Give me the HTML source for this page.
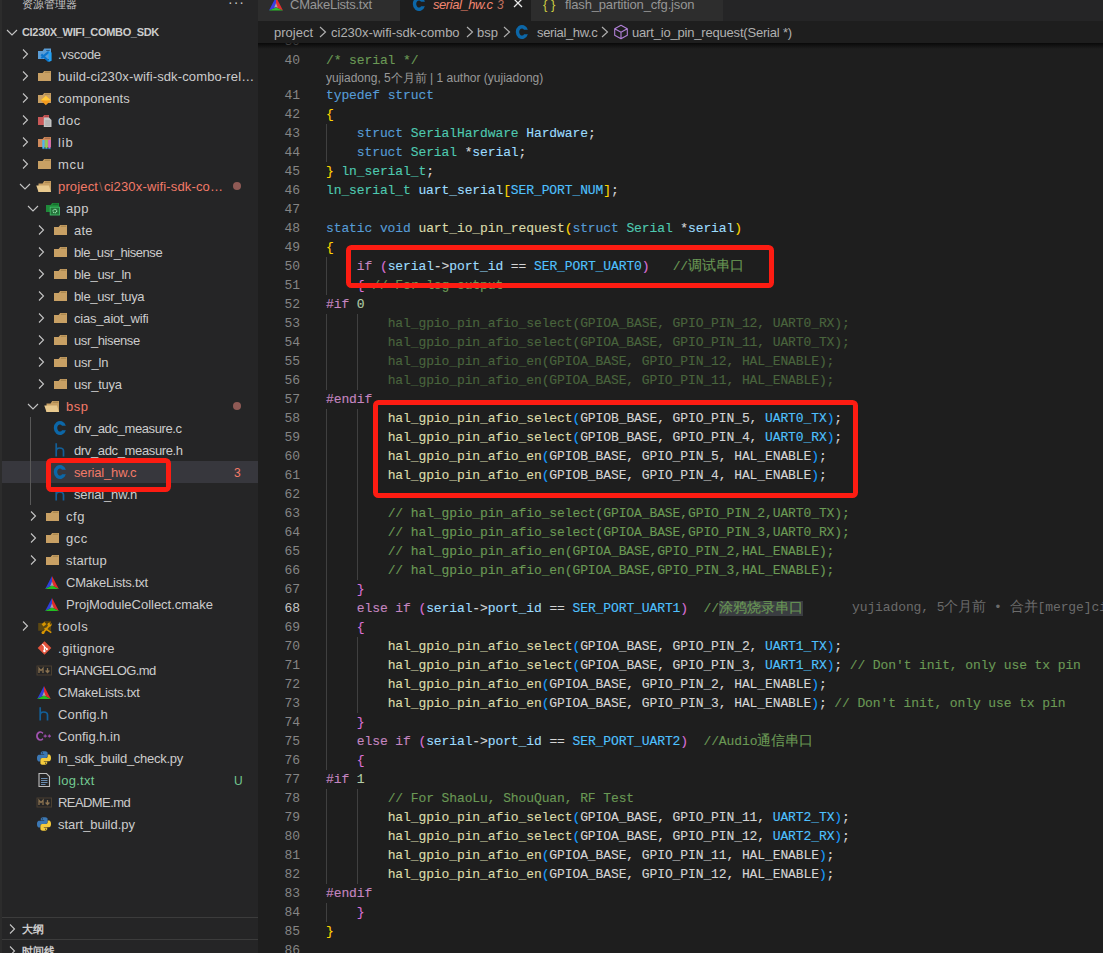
<!DOCTYPE html>
<html><head><meta charset="utf-8">
<style>
*{margin:0;padding:0;box-sizing:border-box}
html,body{width:1103px;height:953px;overflow:hidden;background:#1e1e1e}
body{position:relative;font-family:"Liberation Sans",sans-serif}
#side{position:absolute;left:0;top:0;width:258px;height:953px;background:#252526;overflow:hidden}
#side .edge{position:absolute;left:0;top:0;width:2px;height:953px;background:#2c2c2c}
.hdr{position:absolute;left:22px;top:-3px;font-size:11px;color:#c8c8c8;line-height:14px}
.more{position:absolute;left:228px;top:-6px;font-size:14px;color:#c5c5c5;letter-spacing:1px}
.root{position:absolute;left:0;top:21px;width:258px;height:22px}
.root .lbl{position:absolute;left:22px;top:0;line-height:22px;font-size:11px;font-weight:bold;color:#cccccc;letter-spacing:-0.32px}
.row{position:absolute;left:2px;width:256px;height:22px}
.row.sel{background:#37373d}
.row .lbl{position:absolute;top:1px;line-height:22px;font-size:13px;white-space:nowrap;margin-left:-2px}
.row .ico{position:absolute;top:3px;width:16px;height:16px;margin-left:-2px}
.row .ico svg,.row .chev svg{display:block}
.row .chev{position:absolute;top:3px;width:16px;height:16px;margin-left:-2px}
.sep{color:#8a5a50;padding:0 1px}
.dot{position:absolute;left:231px;top:7px;width:8px;height:8px;border-radius:50%;background:#8f5a55}
.badge{position:absolute;left:232px;top:1px;line-height:22px;font-size:12px}
.guide{position:absolute;left:30px;top:417px;width:1px;height:88px;background:#585858}
.sect{position:absolute;left:2px;width:256px;height:22px;border-top:1px solid #3c3c3c}
.sect .lbl{position:absolute;left:20px;top:1px;line-height:21px;font-size:11px;font-weight:bold;color:#cccccc}
.sect .chev{position:absolute;left:2px;top:3px}
.sect svg{display:block}

#tabs{position:absolute;left:258px;top:0;width:845px;height:21px;background:#252526}
.tab{position:absolute;top:0;height:21px;background:#2d2d2d;white-space:nowrap}
.tab.act{background:#1e1e1e}
.tab .t{position:absolute;top:-5px;line-height:20px;font-size:13px;color:#969696}
.tab svg{position:absolute;display:block}
#crumb{position:absolute;left:258px;top:21px;width:845px;height:22px;background:#1e1e1e;white-space:nowrap}
#crumb span{position:absolute;top:1px;line-height:22px;font-size:13px;color:#b0b0b0}
#crumb svg{position:absolute;display:block}
#editor{position:absolute;left:258px;top:43px;width:845px;height:910px;background:#1e1e1e;overflow:hidden}
#editor .inner{position:absolute;left:-258px;top:-43px;width:1103px;height:953px}
.shadow{position:absolute;left:258px;top:43px;width:845px;height:6px;background:linear-gradient(#000000b0,#00000000)}
.ln{position:absolute;left:258px;width:42px;text-align:right;font-family:"Liberation Mono",monospace;font-size:13px;line-height:19px;height:19px;color:#858585;letter-spacing:-0.1px}
.ln.cur{color:#c6c6c6}
.cl{position:absolute;left:326px;height:19px;line-height:19px;font-family:"Liberation Mono",monospace;font-size:13px;letter-spacing:-0.1px;white-space:pre;color:#d4d4d4;-webkit-text-stroke:0.12px}
.k{color:#569cd6}.c{color:#c586c0}.f{color:#dcdcaa}.v{color:#9cdcfe}.t{color:#4ec9b0}.m{color:#6a9955}
.n{color:#b5cea8}.e{color:#4fc1ff}.b1{color:#ffd700}.b2{color:#da70d6}.b3{color:#179fff}
.ia{color:#6a9955;opacity:.57}
.hl{color:#6a9955;background:#3a3d41}
.ig{position:absolute;width:1px;background:#404040}
.zh{font-size:14px;letter-spacing:0}
.lens{position:absolute;left:326px;top:70px;line-height:16px;font-size:12px;color:#999999;white-space:nowrap}
.blame{position:absolute;left:852px;top:598px;line-height:19px;font-family:"Liberation Mono",monospace;font-size:13px;letter-spacing:-0.1px;color:#6b6b6b;white-space:pre}
.rbox{position:absolute;border:5px solid #fd1c12;border-radius:5.5px}
</style></head><body>
<div id="side">
  <div class="edge"></div>
  <div class="hdr">资源管理器</div>
  <div class="more">···</div>
  <div class="root"><span class="chev" style="position:absolute;left:4px;top:3px"><svg width="16" height="16" viewBox="0 0 16 16"><path d="M3 6l5 5 5-5" fill="none" stroke="#c5c5c5" stroke-width="1.1"/></svg></span><span class="lbl">CI230X_WIFI_COMBO_SDK</span></div>
<div class="row" style="top:43px"><span class="chev" style="left:17px"><svg width="16" height="16" viewBox="0 0 16 16"><path d="M6 3.5L10.5 8 6 12.5" fill="none" stroke="#c5c5c5" stroke-width="1.1"/></svg></span><span class="ico" style="left:36px"><svg width="16" height="16" viewBox="0 0 16 16"><path d="M2 5H6.6L8.2 2.6H15V13H2Z" fill="#5a9dd6"/><path d="M10.2 4.5H13.7" stroke="#2c5a80" stroke-width=".9"/><path d="M5.3 8.4L12.8 15.2M5.3 12L12.8 5.9" stroke="#0b74cc" stroke-width="2.1"/><path d="M12.6 5.4L15.6 6.6V14.8L12.6 16Z" fill="#22a1f4"/></svg></span><span class="lbl" style="left:58px;color:#cccccc;letter-spacing:-0.283px">.vscode</span></div>
<div class="row" style="top:65px"><span class="chev" style="left:17px"><svg width="16" height="16" viewBox="0 0 16 16"><path d="M6 3.5L10.5 8 6 12.5" fill="none" stroke="#c5c5c5" stroke-width="1.1"/></svg></span><span class="ico" style="left:36px"><svg width="16" height="16" viewBox="0 0 16 16"><path d="M2 5H6.6L8.2 3H15V13H2Z" fill="#c8a064"/><path d="M8.8 4.2H14.2" stroke="#9c7a45" stroke-width=".9"/></svg></span><span class="lbl" style="left:58px;color:#cccccc;letter-spacing:0.129px">build-ci230x-wifi-sdk-combo-rel…</span></div>
<div class="row" style="top:87px"><span class="chev" style="left:17px"><svg width="16" height="16" viewBox="0 0 16 16"><path d="M6 3.5L10.5 8 6 12.5" fill="none" stroke="#c5c5c5" stroke-width="1.1"/></svg></span><span class="ico" style="left:36px"><svg width="16" height="16" viewBox="0 0 16 16"><path d="M2 5H6.6L8.2 3H15V13H2Z" fill="#c8a064"/><path d="M8.8 4.2H14.2" stroke="#9c7a45" stroke-width=".9"/><path d="M9.8 5.8L15 10.2L9.8 15.2L4.8 10.2Z" fill="#f29a1e"/><path d="M9.8 5.8L15 10.2L9.8 10.6L4.8 10.2Z" fill="#ffc93a"/></svg></span><span class="lbl" style="left:58px;color:#cccccc;letter-spacing:0.111px">components</span></div>
<div class="row" style="top:109px"><span class="chev" style="left:17px"><svg width="16" height="16" viewBox="0 0 16 16"><path d="M6 3.5L10.5 8 6 12.5" fill="none" stroke="#c5c5c5" stroke-width="1.1"/></svg></span><span class="ico" style="left:36px"><svg width="16" height="16" viewBox="0 0 16 16"><path d="M2 5H6.6L8.2 3H13V13H2Z" fill="#c95858"/><path d="M8.8 4.2H12.5" stroke="#9c4040" stroke-width=".9"/><path d="M7.8 5.5H13L15.5 8V15H7.8Z" fill="#c4c4c4"/><path d="M9.2 9H14M9.2 11H14M9.2 13H14" stroke="#9a9a9a" stroke-width=".8"/></svg></span><span class="lbl" style="left:58px;color:#cccccc;letter-spacing:0.700px">doc</span></div>
<div class="row" style="top:131px"><span class="chev" style="left:17px"><svg width="16" height="16" viewBox="0 0 16 16"><path d="M6 3.5L10.5 8 6 12.5" fill="none" stroke="#c5c5c5" stroke-width="1.1"/></svg></span><span class="ico" style="left:36px"><svg width="16" height="16" viewBox="0 0 16 16"><path d="M2 5H6.6L8.2 3H15V13H2Z" fill="#cf8a5c"/><path d="M8.8 4.2H14.2" stroke="#9c6040" stroke-width=".9"/><rect x="6.3" y="6" width="2.3" height="8" fill="#4db6ef"/><rect x="9.3" y="6" width="2.3" height="8" fill="#83d05a"/><rect x="12.3" y="6" width="2.3" height="8" fill="#d660d0"/><path d="M6.3 14.6h2.3M9.3 14.6h2.3M12.3 14.6h2.3" stroke="#3a9ad0" stroke-width="1"/></svg></span><span class="lbl" style="left:58px;color:#cccccc;letter-spacing:0.900px">lib</span></div>
<div class="row" style="top:153px"><span class="chev" style="left:17px"><svg width="16" height="16" viewBox="0 0 16 16"><path d="M6 3.5L10.5 8 6 12.5" fill="none" stroke="#c5c5c5" stroke-width="1.1"/></svg></span><span class="ico" style="left:36px"><svg width="16" height="16" viewBox="0 0 16 16"><path d="M2 5H6.6L8.2 3H15V13H2Z" fill="#c8a064"/><path d="M8.8 4.2H14.2" stroke="#9c7a45" stroke-width=".9"/></svg></span><span class="lbl" style="left:58px;color:#cccccc;letter-spacing:0.700px">mcu</span></div>
<div class="row" style="top:175px"><span class="chev" style="left:17px"><svg width="16" height="16" viewBox="0 0 16 16"><path d="M3 6l5 5 5-5" fill="none" stroke="#c5c5c5" stroke-width="1.1"/></svg></span><span class="ico" style="left:36px"><svg width="16" height="16" viewBox="0 0 16 16"><path d="M2.5 5.5H6.6L8.2 3H15V14H2.5Z" fill="#c8a064"/><path d="M8.8 4.2H14.2" stroke="#9c7a45" stroke-width=".9"/><path d="M0.3 7.6H13L15 14H2.5Z" fill="#e8c98e"/></svg></span><span class="lbl" style="left:58px;color:#f27a68;letter-spacing:0.154px">project<span class="sep">\</span>ci230x-wifi-sdk-co…</span><span class="dot"></span></div>
<div class="row" style="top:197px"><span class="chev" style="left:25px"><svg width="16" height="16" viewBox="0 0 16 16"><path d="M3 6l5 5 5-5" fill="none" stroke="#c5c5c5" stroke-width="1.1"/></svg></span><span class="ico" style="left:44px"><svg width="16" height="16" viewBox="0 0 16 16"><path d="M2 5H6.6L8.2 3H15V12H2Z" fill="#1f8a3a"/><path d="M8.8 4.2H14.2" stroke="#136028" stroke-width=".9"/><rect x="6.2" y="7.2" width="9.3" height="7.8" fill="#25733a" stroke="#3fbf68" stroke-width=".9"/><circle cx="10.9" cy="11" r="1.8" fill="none" stroke="#a6efbd" stroke-width="1.1" stroke-dasharray="1 .6"/></svg></span><span class="lbl" style="left:66px;color:#cccccc;letter-spacing:0.350px">app</span></div>
<div class="row" style="top:219px"><span class="chev" style="left:33px"><svg width="16" height="16" viewBox="0 0 16 16"><path d="M6 3.5L10.5 8 6 12.5" fill="none" stroke="#c5c5c5" stroke-width="1.1"/></svg></span><span class="ico" style="left:52px"><svg width="16" height="16" viewBox="0 0 16 16"><path d="M2 5H6.6L8.2 3H15V13H2Z" fill="#c8a064"/><path d="M8.8 4.2H14.2" stroke="#9c7a45" stroke-width=".9"/></svg></span><span class="lbl" style="left:74px;color:#cccccc;letter-spacing:0.250px">ate</span></div>
<div class="row" style="top:241px"><span class="chev" style="left:33px"><svg width="16" height="16" viewBox="0 0 16 16"><path d="M6 3.5L10.5 8 6 12.5" fill="none" stroke="#c5c5c5" stroke-width="1.1"/></svg></span><span class="ico" style="left:52px"><svg width="16" height="16" viewBox="0 0 16 16"><path d="M2 5H6.6L8.2 3H15V13H2Z" fill="#c8a064"/><path d="M8.8 4.2H14.2" stroke="#9c7a45" stroke-width=".9"/></svg></span><span class="lbl" style="left:74px;color:#cccccc;letter-spacing:-0.429px">ble_usr_hisense</span></div>
<div class="row" style="top:263px"><span class="chev" style="left:33px"><svg width="16" height="16" viewBox="0 0 16 16"><path d="M6 3.5L10.5 8 6 12.5" fill="none" stroke="#c5c5c5" stroke-width="1.1"/></svg></span><span class="ico" style="left:52px"><svg width="16" height="16" viewBox="0 0 16 16"><path d="M2 5H6.6L8.2 3H15V13H2Z" fill="#c8a064"/><path d="M8.8 4.2H14.2" stroke="#9c7a45" stroke-width=".9"/></svg></span><span class="lbl" style="left:74px;color:#cccccc;letter-spacing:-0.300px">ble_usr_ln</span></div>
<div class="row" style="top:285px"><span class="chev" style="left:33px"><svg width="16" height="16" viewBox="0 0 16 16"><path d="M6 3.5L10.5 8 6 12.5" fill="none" stroke="#c5c5c5" stroke-width="1.1"/></svg></span><span class="ico" style="left:52px"><svg width="16" height="16" viewBox="0 0 16 16"><path d="M2 5H6.6L8.2 3H15V13H2Z" fill="#c8a064"/><path d="M8.8 4.2H14.2" stroke="#9c7a45" stroke-width=".9"/></svg></span><span class="lbl" style="left:74px;color:#cccccc;letter-spacing:-0.355px">ble_usr_tuya</span></div>
<div class="row" style="top:307px"><span class="chev" style="left:33px"><svg width="16" height="16" viewBox="0 0 16 16"><path d="M6 3.5L10.5 8 6 12.5" fill="none" stroke="#c5c5c5" stroke-width="1.1"/></svg></span><span class="ico" style="left:52px"><svg width="16" height="16" viewBox="0 0 16 16"><path d="M2 5H6.6L8.2 3H15V13H2Z" fill="#c8a064"/><path d="M8.8 4.2H14.2" stroke="#9c7a45" stroke-width=".9"/></svg></span><span class="lbl" style="left:74px;color:#cccccc;letter-spacing:-0.200px">cias_aiot_wifi</span></div>
<div class="row" style="top:329px"><span class="chev" style="left:33px"><svg width="16" height="16" viewBox="0 0 16 16"><path d="M6 3.5L10.5 8 6 12.5" fill="none" stroke="#c5c5c5" stroke-width="1.1"/></svg></span><span class="ico" style="left:52px"><svg width="16" height="16" viewBox="0 0 16 16"><path d="M2 5H6.6L8.2 3H15V13H2Z" fill="#c8a064"/><path d="M8.8 4.2H14.2" stroke="#9c7a45" stroke-width=".9"/></svg></span><span class="lbl" style="left:74px;color:#cccccc;letter-spacing:-0.390px">usr_hisense</span></div>
<div class="row" style="top:351px"><span class="chev" style="left:33px"><svg width="16" height="16" viewBox="0 0 16 16"><path d="M6 3.5L10.5 8 6 12.5" fill="none" stroke="#c5c5c5" stroke-width="1.1"/></svg></span><span class="ico" style="left:52px"><svg width="16" height="16" viewBox="0 0 16 16"><path d="M2 5H6.6L8.2 3H15V13H2Z" fill="#c8a064"/><path d="M8.8 4.2H14.2" stroke="#9c7a45" stroke-width=".9"/></svg></span><span class="lbl" style="left:74px;color:#cccccc;letter-spacing:-0.180px">usr_ln</span></div>
<div class="row" style="top:373px"><span class="chev" style="left:33px"><svg width="16" height="16" viewBox="0 0 16 16"><path d="M6 3.5L10.5 8 6 12.5" fill="none" stroke="#c5c5c5" stroke-width="1.1"/></svg></span><span class="ico" style="left:52px"><svg width="16" height="16" viewBox="0 0 16 16"><path d="M2 5H6.6L8.2 3H15V13H2Z" fill="#c8a064"/><path d="M8.8 4.2H14.2" stroke="#9c7a45" stroke-width=".9"/></svg></span><span class="lbl" style="left:74px;color:#cccccc;letter-spacing:-0.257px">usr_tuya</span></div>
<div class="row" style="top:395px"><span class="chev" style="left:25px"><svg width="16" height="16" viewBox="0 0 16 16"><path d="M3 6l5 5 5-5" fill="none" stroke="#c5c5c5" stroke-width="1.1"/></svg></span><span class="ico" style="left:44px"><svg width="16" height="16" viewBox="0 0 16 16"><path d="M2.5 5.5H6.6L8.2 3H15V14H2.5Z" fill="#c8a064"/><path d="M8.8 4.2H14.2" stroke="#9c7a45" stroke-width=".9"/><path d="M0.3 7.6H13L15 14H2.5Z" fill="#e8c98e"/></svg></span><span class="lbl" style="left:66px;color:#f27a68;letter-spacing:0.500px">bsp</span><span class="dot"></span></div>
<div class="row" style="top:417px"><span class="ico" style="left:52px"><svg width="16" height="16" viewBox="0 0 16 16"><path d="M13.89 5.8A6.2 7 0 1 0 13.89 10.2L10.06 10.2A2.6 3.6 0 1 1 10.06 5.8Z" fill="#0c67a8"/></svg></span><span class="lbl" style="left:74px;color:#cccccc;letter-spacing:-0.381px">drv_adc_measure.c</span></div>
<div class="row" style="top:439px"><span class="ico" style="left:52px"><svg width="16" height="16" viewBox="0 0 16 16"><path d="M4.2 1.3V14.5M4.2 8.8C4.2 7 5.5 6 7.6 6S11.5 7 11.5 9V14.5" fill="none" stroke="#135f98" stroke-width="1.7"/></svg></span><span class="lbl" style="left:74px;color:#cccccc;letter-spacing:-0.363px">drv_adc_measure.h</span></div>
<div class="row sel" style="top:461px"><span class="ico" style="left:52px"><svg width="16" height="16" viewBox="0 0 16 16"><path d="M13.89 5.8A6.2 7 0 1 0 13.89 10.2L10.06 10.2A2.6 3.6 0 1 1 10.06 5.8Z" fill="#0c67a8"/></svg></span><span class="lbl" style="left:74px;color:#f27a68;letter-spacing:-0.170px">serial_hw.c</span><span class="badge" style="color:#f27a68">3</span></div>
<div class="row" style="top:483px"><span class="ico" style="left:52px"><svg width="16" height="16" viewBox="0 0 16 16"><path d="M4.2 1.3V14.5M4.2 8.8C4.2 7 5.5 6 7.6 6S11.5 7 11.5 9V14.5" fill="none" stroke="#135f98" stroke-width="1.7"/></svg></span><span class="lbl" style="left:74px;color:#cccccc;letter-spacing:-0.170px">serial_hw.h</span></div>
<div class="row" style="top:505px"><span class="chev" style="left:25px"><svg width="16" height="16" viewBox="0 0 16 16"><path d="M6 3.5L10.5 8 6 12.5" fill="none" stroke="#c5c5c5" stroke-width="1.1"/></svg></span><span class="ico" style="left:44px"><svg width="16" height="16" viewBox="0 0 16 16"><path d="M2 5H6.6L8.2 3H15V13H2Z" fill="#c8a064"/><path d="M8.8 4.2H14.2" stroke="#9c7a45" stroke-width=".9"/></svg></span><span class="lbl" style="left:66px;color:#cccccc;letter-spacing:0.550px">cfg</span></div>
<div class="row" style="top:527px"><span class="chev" style="left:25px"><svg width="16" height="16" viewBox="0 0 16 16"><path d="M6 3.5L10.5 8 6 12.5" fill="none" stroke="#c5c5c5" stroke-width="1.1"/></svg></span><span class="ico" style="left:44px"><svg width="16" height="16" viewBox="0 0 16 16"><path d="M2 5H6.6L8.2 3H15V13H2Z" fill="#c8a064"/><path d="M8.8 4.2H14.2" stroke="#9c7a45" stroke-width=".9"/></svg></span><span class="lbl" style="left:66px;color:#cccccc;letter-spacing:0.500px">gcc</span></div>
<div class="row" style="top:549px"><span class="chev" style="left:25px"><svg width="16" height="16" viewBox="0 0 16 16"><path d="M6 3.5L10.5 8 6 12.5" fill="none" stroke="#c5c5c5" stroke-width="1.1"/></svg></span><span class="ico" style="left:44px"><svg width="16" height="16" viewBox="0 0 16 16"><path d="M2 5H6.6L8.2 3H15V13H2Z" fill="#c8a064"/><path d="M8.8 4.2H14.2" stroke="#9c7a45" stroke-width=".9"/></svg></span><span class="lbl" style="left:66px;color:#cccccc;letter-spacing:0.167px">startup</span></div>
<div class="row" style="top:571px"><span class="ico" style="left:44px"><svg width="16" height="16" viewBox="0 0 16 16"><path d="M8 2L1.2 15L8 11.5Z" fill="#2f3fd8"/><path d="M8 2L14.8 15L8 11.5Z" fill="#e02a2a"/><path d="M1.2 15H14.8L8 11.5Z" fill="#22c022"/><path d="M8 7.5L6.2 12.2L8 11.5L9.8 12.2Z" fill="#a8a8a8"/></svg></span><span class="lbl" style="left:66px;color:#cccccc;letter-spacing:-0.238px">CMakeLists.txt</span></div>
<div class="row" style="top:593px"><span class="ico" style="left:44px"><svg width="16" height="16" viewBox="0 0 16 16"><path d="M8 2L1.2 15L8 11.5Z" fill="#2f3fd8"/><path d="M8 2L14.8 15L8 11.5Z" fill="#e02a2a"/><path d="M1.2 15H14.8L8 11.5Z" fill="#22c022"/><path d="M8 7.5L6.2 12.2L8 11.5L9.8 12.2Z" fill="#a8a8a8"/></svg></span><span class="lbl" style="left:66px;color:#cccccc;letter-spacing:-0.018px">ProjModuleCollect.cmake</span></div>
<div class="row" style="top:615px"><span class="chev" style="left:17px"><svg width="16" height="16" viewBox="0 0 16 16"><path d="M6 3.5L10.5 8 6 12.5" fill="none" stroke="#c5c5c5" stroke-width="1.1"/></svg></span><span class="ico" style="left:36px"><svg width="16" height="16" viewBox="0 0 16 16"><path d="M2.2 5H7L8.6 3H15V12.8H2.2Z" fill="#5c4812"/><path d="M9.2 4H14.4" stroke="#3a2c08" stroke-width=".8"/><path d="M8.6 10.2L15.3 14.7" stroke="#d89600" stroke-width="1.6"/><path d="M5.6 6.2L8.4 3.9L10.3 6.2L7.5 8.6Z" fill="#d89600"/><path d="M7.4 14.4L13.2 7.6" stroke="#d89600" stroke-width="1.7"/><circle cx="13.6" cy="6.6" r="2.1" fill="#d89600"/><circle cx="14.6" cy="5.7" r=".9" fill="#5c4812"/><circle cx="7" cy="14.6" r="1.5" fill="#d89600"/></svg></span><span class="lbl" style="left:58px;color:#cccccc;letter-spacing:0.550px">tools</span></div>
<div class="row" style="top:637px"><span class="ico" style="left:36px"><svg width="16" height="16" viewBox="0 0 16 16"><path d="M8.5 1.2L15.3 8L8.5 14.8L1.7 8Z" fill="#e2533c"/><path d="M6.3 4.2L8.4 6.3V11M8.4 6.6L10.8 9" stroke="#fff" stroke-width="1.2" fill="none"/><circle cx="8.4" cy="11" r="1.2" fill="#fff"/><circle cx="10.8" cy="9.2" r="1.1" fill="#fff"/></svg></span><span class="lbl" style="left:58px;color:#cccccc;letter-spacing:0.322px">.gitignore</span></div>
<div class="row" style="top:659px"><span class="ico" style="left:36px"><svg width="16" height="16" viewBox="0 0 16 16"><rect x="1" y="4" width="14.5" height="9" fill="none" stroke="#4a3f30" stroke-width="1"/><path d="M3 11V6.3L5 8.6L7 6.3V11M11.5 6V10.3M9.6 8.5L11.5 10.5L13.4 8.5" stroke="#8a7250" stroke-width="1.3" fill="none"/></svg></span><span class="lbl" style="left:58px;color:#cccccc;letter-spacing:-0.600px">CHANGELOG.md</span></div>
<div class="row" style="top:681px"><span class="ico" style="left:36px"><svg width="16" height="16" viewBox="0 0 16 16"><path d="M8 2L1.2 15L8 11.5Z" fill="#2f3fd8"/><path d="M8 2L14.8 15L8 11.5Z" fill="#e02a2a"/><path d="M1.2 15H14.8L8 11.5Z" fill="#22c022"/><path d="M8 7.5L6.2 12.2L8 11.5L9.8 12.2Z" fill="#a8a8a8"/></svg></span><span class="lbl" style="left:58px;color:#cccccc;letter-spacing:-0.254px">CMakeLists.txt</span></div>
<div class="row" style="top:703px"><span class="ico" style="left:36px"><svg width="16" height="16" viewBox="0 0 16 16"><path d="M4.2 1.3V14.5M4.2 8.8C4.2 7 5.5 6 7.6 6S11.5 7 11.5 9V14.5" fill="none" stroke="#135f98" stroke-width="1.7"/></svg></span><span class="lbl" style="left:58px;color:#cccccc;letter-spacing:0.171px">Config.h</span></div>
<div class="row" style="top:725px"><span class="ico" style="left:36px"><svg width="16" height="16" viewBox="0 0 16 16"><path d="M7.4 4.8A4.2 4.8 0 1 0 7.4 11.2L6.5 10.1A2.6 3.1 0 1 1 6.5 5.9Z" fill="#a052b0"/><path d="M7.6 8H10.8M9.2 6.4V9.6M11.8 8H15M13.4 6.4V9.6" stroke="#9a4ca8" stroke-width="1.25"/></svg></span><span class="lbl" style="left:58px;color:#cccccc;letter-spacing:0.010px">Config.h.in</span></div>
<div class="row" style="top:747px"><span class="ico" style="left:36px"><svg width="16" height="16" viewBox="0 0 16 16"><path d="M8 1.2C4.6 1.2 4.8 2.7 4.8 2.7V4.3H8.2V4.8H3.3C3.3 4.8 1 4.5 1 8.1S3 11.6 3 11.6H4.3V9.9C4.3 9.9 4.2 7.9 6.3 7.9H9.7C9.7 7.9 11.6 7.9 11.6 6V2.9C11.6 2.9 11.9 1.2 8 1.2Z" fill="#3c78b4"/><circle cx="6.3" cy="2.8" r=".6" fill="#1e1e1e"/><path d="M8 14.8C11.4 14.8 11.2 13.3 11.2 13.3V11.7H7.8V11.2H12.7C12.7 11.2 15 11.5 15 7.9S13 4.4 13 4.4H11.7V6.1C11.7 6.1 11.8 8.1 9.7 8.1H6.3C6.3 8.1 4.4 8.1 4.4 10V13.1C4.4 13.1 4.1 14.8 8 14.8Z" fill="#f5cb3c"/><circle cx="9.7" cy="13.2" r=".6" fill="#1e1e1e"/></svg></span><span class="lbl" style="left:58px;color:#cccccc;letter-spacing:-0.280px">ln_sdk_build_check.py</span></div>
<div class="row" style="top:769px"><span class="ico" style="left:36px"><svg width="16" height="16" viewBox="0 0 16 16"><path d="M3 1.5H10.5L13.5 4.5V14.5H3Z" fill="none" stroke="#bdbdbd" stroke-width="1.1"/><path d="M5 6.5H11.5M5 8.5H11.5M5 10.5H11.5M5 12.5H9.5" stroke="#6a8cb0" stroke-width="1"/></svg></span><span class="lbl" style="left:58px;color:#73c991;letter-spacing:0.267px">log.txt</span><span class="badge" style="color:#73c991">U</span></div>
<div class="row" style="top:791px"><span class="ico" style="left:36px"><svg width="16" height="16" viewBox="0 0 16 16"><rect x="1" y="4" width="14.5" height="9" fill="none" stroke="#4a3f30" stroke-width="1"/><path d="M3 11V6.3L5 8.6L7 6.3V11M11.5 6V10.3M9.6 8.5L11.5 10.5L13.4 8.5" stroke="#8a7250" stroke-width="1.3" fill="none"/></svg></span><span class="lbl" style="left:58px;color:#cccccc;letter-spacing:-0.575px">README.md</span></div>
<div class="row" style="top:813px"><span class="ico" style="left:36px"><svg width="16" height="16" viewBox="0 0 16 16"><path d="M8 1.2C4.6 1.2 4.8 2.7 4.8 2.7V4.3H8.2V4.8H3.3C3.3 4.8 1 4.5 1 8.1S3 11.6 3 11.6H4.3V9.9C4.3 9.9 4.2 7.9 6.3 7.9H9.7C9.7 7.9 11.6 7.9 11.6 6V2.9C11.6 2.9 11.9 1.2 8 1.2Z" fill="#3c78b4"/><circle cx="6.3" cy="2.8" r=".6" fill="#1e1e1e"/><path d="M8 14.8C11.4 14.8 11.2 13.3 11.2 13.3V11.7H7.8V11.2H12.7C12.7 11.2 15 11.5 15 7.9S13 4.4 13 4.4H11.7V6.1C11.7 6.1 11.8 8.1 9.7 8.1H6.3C6.3 8.1 4.4 8.1 4.4 10V13.1C4.4 13.1 4.1 14.8 8 14.8Z" fill="#f5cb3c"/><circle cx="9.7" cy="13.2" r=".6" fill="#1e1e1e"/></svg></span><span class="lbl" style="left:58px;color:#cccccc;letter-spacing:-0.031px">start_build.py</span></div>
  <div class="guide"></div>
  <div class="sect" style="top:917px"><span class="chev"><svg width="16" height="16" viewBox="0 0 16 16"><path d="M6 3.5L10.5 8 6 12.5" fill="none" stroke="#c5c5c5" stroke-width="1.1"/></svg></span><span class="lbl">大纲</span></div>
  <div class="sect" style="top:939px"><span class="chev"><svg width="16" height="16" viewBox="0 0 16 16"><path d="M6 3.5L10.5 8 6 12.5" fill="none" stroke="#c5c5c5" stroke-width="1.1"/></svg></span><span class="lbl">时间线</span></div>
  <div class="rbox" style="left:46px;top:458px;width:125px;height:34px"></div>
</div>

<div id="tabs">
  <div class="tab" style="left:0;width:142px">
    <svg style="left:10px;top:-4px" width="16" height="16" viewBox="0 0 16 16"><path d="M8 1L1 14.5l7-3z" fill="#3a3ee0"/><path d="M8 1l7 13.5-7-3z" fill="#e03030"/><path d="M1 14.5h14L8 11.5z" fill="#2cc02c"/><path d="M8 7L6.3 11.6L8 11L9.7 11.6Z" fill="#a8a8a8"/></svg>
    <span class="t" style="left:32px;letter-spacing:-0.25px">CMakeLists.txt</span>
  </div>
  <div class="tab act" style="left:142px;width:131px">
    <svg style="left:11px;top:-4.5px" width="16" height="16" viewBox="0 0 16 16"><path d="M13.89 5.8A6.2 7 0 1 0 13.89 10.2L10.06 10.2A2.6 3.6 0 1 1 10.06 5.8Z" fill="#0c67a8"/></svg>
    <span class="t" style="left:33px;color:#f48771;font-style:italic;letter-spacing:-0.43px">serial_hw.c</span>
    <span class="t" style="left:97px;top:-5px;color:#c0705f;font-size:12px;font-style:italic">3</span>
    <svg style="left:110px;top:-5px" width="16" height="16" viewBox="0 0 16 16"><path d="M4 4l8 8M12 4l-8 8" stroke="#e8e8e8" stroke-width="1.3"/></svg>
  </div>
  <div class="tab" style="left:273px;width:192px">
    <span class="t" style="left:12px;color:#cbcb41">{ }</span>
    <span class="t" style="left:34px;letter-spacing:-0.15px">flash_partition_cfg.json</span>
  </div>
</div>

<div id="crumb">
  <span style="left:16px">project</span>
  <svg style="left:57px;top:3px" width="16" height="16" viewBox="0 0 16 16"><path d="M5 3L10.5 8L5 13" fill="none" stroke="#b0b0b0" stroke-width="1.15"/></svg>
  <span style="left:73px">ci230x-wifi-sdk-combo</span>
  <svg style="left:203.5px;top:3px" width="16" height="16" viewBox="0 0 16 16"><path d="M5 3L10.5 8L5 13" fill="none" stroke="#b0b0b0" stroke-width="1.15"/></svg>
  <span style="left:219px">bsp</span>
  <svg style="left:240.5px;top:3px" width="16" height="16" viewBox="0 0 16 16"><path d="M5 3L10.5 8L5 13" fill="none" stroke="#b0b0b0" stroke-width="1.15"/></svg>
  <svg style="left:255.5px;top:3px" width="16" height="16" viewBox="0 0 16 16"><path d="M13.89 5.8A6.2 7 0 1 0 13.89 10.2L10.06 10.2A2.6 3.6 0 1 1 10.06 5.8Z" fill="#0c67a8"/></svg>
  <span style="left:279px;letter-spacing:-0.35px">serial_hw.c</span>
  <svg style="left:339px;top:3px" width="16" height="16" viewBox="0 0 16 16"><path d="M5 3L10.5 8L5 13" fill="none" stroke="#b0b0b0" stroke-width="1.15"/></svg>
  <svg style="left:355px;top:3px" width="16" height="16" viewBox="0 0 16 16"><path d="M8 1.3L14.3 4.7V11.3L8 14.7L1.7 11.3V4.7Z M1.7 4.7L8 8.2L14.3 4.7M8 8.2V14.7" fill="none" stroke="#b180d7" stroke-width="1.1" stroke-linejoin="round"/></svg>
  <span style="left:374px;letter-spacing:-0.19px">uart_io_pin_request(Serial *)</span>
</div>

<div id="editor"><div class="inner">
<div class="ig" style="left:326.0px;top:123.5px;height:38.0px"></div>
<div class="ig" style="left:326.0px;top:256.5px;height:38.0px"></div>
<div class="ig" style="left:326.0px;top:313.5px;height:76.0px"></div>
<div class="ig" style="left:326.0px;top:408.5px;height:361.0px"></div>
<div class="ig" style="left:326.0px;top:788.5px;height:95.0px"></div>
<div class="ig" style="left:326.0px;top:902.5px;height:19.0px"></div>
<div class="ig" style="left:356.8px;top:313.5px;height:76.0px"></div>
<div class="ig" style="left:356.8px;top:408.5px;height:171.0px"></div>
<div class="ig" style="left:356.8px;top:636.5px;height:76.0px"></div>
<div class="ig" style="left:356.8px;top:788.5px;height:95.0px"></div>
<div class="ln" style="top:31.5px">39</div>
<div class="ln" style="top:50.5px">40</div>
<div class="ln" style="top:85.5px">41</div>
<div class="ln" style="top:104.5px">42</div>
<div class="ln" style="top:123.5px">43</div>
<div class="ln" style="top:142.5px">44</div>
<div class="ln" style="top:161.5px">45</div>
<div class="ln" style="top:180.5px">46</div>
<div class="ln" style="top:199.5px">47</div>
<div class="ln" style="top:218.5px">48</div>
<div class="ln" style="top:237.5px">49</div>
<div class="ln" style="top:256.5px">50</div>
<div class="ln" style="top:275.5px">51</div>
<div class="ln" style="top:294.5px">52</div>
<div class="ln" style="top:313.5px">53</div>
<div class="ln" style="top:332.5px">54</div>
<div class="ln" style="top:351.5px">55</div>
<div class="ln" style="top:370.5px">56</div>
<div class="ln" style="top:389.5px">57</div>
<div class="ln" style="top:408.5px">58</div>
<div class="ln" style="top:427.5px">59</div>
<div class="ln" style="top:446.5px">60</div>
<div class="ln" style="top:465.5px">61</div>
<div class="ln" style="top:484.5px">62</div>
<div class="ln" style="top:503.5px">63</div>
<div class="ln" style="top:522.5px">64</div>
<div class="ln" style="top:541.5px">65</div>
<div class="ln" style="top:560.5px">66</div>
<div class="ln" style="top:579.5px">67</div>
<div class="ln cur" style="top:598.5px">68</div>
<div class="ln" style="top:617.5px">69</div>
<div class="ln" style="top:636.5px">70</div>
<div class="ln" style="top:655.5px">71</div>
<div class="ln" style="top:674.5px">72</div>
<div class="ln" style="top:693.5px">73</div>
<div class="ln" style="top:712.5px">74</div>
<div class="ln" style="top:731.5px">75</div>
<div class="ln" style="top:750.5px">76</div>
<div class="ln" style="top:769.5px">77</div>
<div class="ln" style="top:788.5px">78</div>
<div class="ln" style="top:807.5px">79</div>
<div class="ln" style="top:826.5px">80</div>
<div class="ln" style="top:845.5px">81</div>
<div class="ln" style="top:864.5px">82</div>
<div class="ln" style="top:883.5px">83</div>
<div class="ln" style="top:902.5px">84</div>
<div class="ln" style="top:921.5px">85</div>
<div class="ln" style="top:940.5px">86</div>
<div class="cl" style="top:31.5px"></div>
<div class="cl" style="top:50.5px"><span class="m">/* serial */</span></div>
<div class="cl" style="top:85.5px"><span class="k">typedef</span> <span class="k">struct</span></div>
<div class="cl" style="top:104.5px"><span class="b1">{</span></div>
<div class="cl" style="top:123.5px">    <span class="k">struct</span> <span class="t">SerialHardware</span> <span class="v">Hardware</span>;</div>
<div class="cl" style="top:142.5px">    <span class="k">struct</span> <span class="t">Serial</span> *<span class="v">serial</span>;</div>
<div class="cl" style="top:161.5px"><span class="b1">}</span> <span class="t">ln_serial_t</span>;</div>
<div class="cl" style="top:180.5px"><span class="t">ln_serial_t</span> <span class="v">uart_serial</span><span class="b1">[</span><span class="e">SER_PORT_NUM</span><span class="b1">]</span>;</div>
<div class="cl" style="top:199.5px"></div>
<div class="cl" style="top:218.5px"><span class="k">static</span> <span class="k">void</span> <span class="f">uart_io_pin_request</span><span class="b1">(</span><span class="k">struct</span> <span class="t">Serial</span> *<span class="v">serial</span><span class="b1">)</span></div>
<div class="cl" style="top:237.5px"><span class="b1">{</span></div>
<div class="cl" style="top:256.5px">    <span class="c">if</span> <span class="b2">(</span><span class="v">serial</span>-&gt;<span class="v">port_id</span> == <span class="e">SER_PORT_UART0</span><span class="b2">)</span>   <span class="m">//<span class="zh">调试串口</span></span></div>
<div class="cl" style="top:275.5px">    <span class="b2">{</span> <span class="m">// For log output</span></div>
<div class="cl" style="top:294.5px"><span class="c">#if</span> <span class="n">0</span></div>
<div class="cl" style="top:313.5px">        <span class="ia">hal_gpio_pin_afio_select(GPIOA_BASE, GPIO_PIN_12, UART0_RX);</span></div>
<div class="cl" style="top:332.5px">        <span class="ia">hal_gpio_pin_afio_select(GPIOA_BASE, GPIO_PIN_11, UART0_TX);</span></div>
<div class="cl" style="top:351.5px">        <span class="ia">hal_gpio_pin_afio_en(GPIOA_BASE, GPIO_PIN_12, HAL_ENABLE);</span></div>
<div class="cl" style="top:370.5px">        <span class="ia">hal_gpio_pin_afio_en(GPIOA_BASE, GPIO_PIN_11, HAL_ENABLE);</span></div>
<div class="cl" style="top:389.5px"><span class="c">#endif</span></div>
<div class="cl" style="top:408.5px">        <span class="f">hal_gpio_pin_afio_select</span><span class="b3">(</span>GPIOB_BASE, GPIO_PIN_5, <span class="e">UART0_TX</span><span class="b3">)</span>;</div>
<div class="cl" style="top:427.5px">        <span class="f">hal_gpio_pin_afio_select</span><span class="b3">(</span>GPIOB_BASE, GPIO_PIN_4, <span class="e">UART0_RX</span><span class="b3">)</span>;</div>
<div class="cl" style="top:446.5px">        <span class="f">hal_gpio_pin_afio_en</span><span class="b3">(</span>GPIOB_BASE, GPIO_PIN_5, HAL_ENABLE<span class="b3">)</span>;</div>
<div class="cl" style="top:465.5px">        <span class="f">hal_gpio_pin_afio_en</span><span class="b3">(</span>GPIOB_BASE, GPIO_PIN_4, HAL_ENABLE<span class="b3">)</span>;</div>
<div class="cl" style="top:484.5px"></div>
<div class="cl" style="top:503.5px">        <span class="m">// hal_gpio_pin_afio_select(GPIOA_BASE,GPIO_PIN_2,UART0_TX);</span></div>
<div class="cl" style="top:522.5px">        <span class="m">// hal_gpio_pin_afio_select(GPIOA_BASE,GPIO_PIN_3,UART0_RX);</span></div>
<div class="cl" style="top:541.5px">        <span class="m">// hal_gpio_pin_afio_en(GPIOA_BASE,GPIO_PIN_2,HAL_ENABLE);</span></div>
<div class="cl" style="top:560.5px">        <span class="m">// hal_gpio_pin_afio_en(GPIOA_BASE,GPIO_PIN_3,HAL_ENABLE);</span></div>
<div class="cl" style="top:579.5px">    <span class="b2">}</span></div>
<div class="cl" style="top:598.5px">    <span class="c">else</span> <span class="c">if</span> <span class="b2">(</span><span class="v">serial</span>-&gt;<span class="v">port_id</span> == <span class="e">SER_PORT_UART1</span><span class="b2">)</span>  <span class="m">//</span><span class="hl"><span class="zh">涂鸦烧录串口</span></span></div>
<div class="cl" style="top:617.5px">    <span class="b2">{</span></div>
<div class="cl" style="top:636.5px">        <span class="f">hal_gpio_pin_afio_select</span><span class="b3">(</span>GPIOA_BASE, GPIO_PIN_2, <span class="e">UART1_TX</span><span class="b3">)</span>;</div>
<div class="cl" style="top:655.5px">        <span class="f">hal_gpio_pin_afio_select</span><span class="b3">(</span>GPIOA_BASE, GPIO_PIN_3, <span class="e">UART1_RX</span><span class="b3">)</span>; <span class="m">// Don&#x27;t init, only use tx pin</span></div>
<div class="cl" style="top:674.5px">        <span class="f">hal_gpio_pin_afio_en</span><span class="b3">(</span>GPIOA_BASE, GPIO_PIN_2, HAL_ENABLE<span class="b3">)</span>;</div>
<div class="cl" style="top:693.5px">        <span class="f">hal_gpio_pin_afio_en</span><span class="b3">(</span>GPIOA_BASE, GPIO_PIN_3, HAL_ENABLE<span class="b3">)</span>; <span class="m">// Don&#x27;t init, only use tx pin</span></div>
<div class="cl" style="top:712.5px">    <span class="b2">}</span></div>
<div class="cl" style="top:731.5px">    <span class="c">else</span> <span class="c">if</span> <span class="b2">(</span><span class="v">serial</span>-&gt;<span class="v">port_id</span> == <span class="e">SER_PORT_UART2</span><span class="b2">)</span>  <span class="m">//Audio<span class="zh">通信串口</span></span></div>
<div class="cl" style="top:750.5px">    <span class="b2">{</span></div>
<div class="cl" style="top:769.5px"><span class="c">#if</span> <span class="n">1</span></div>
<div class="cl" style="top:788.5px">        <span class="m">// For ShaoLu, ShouQuan, RF Test</span></div>
<div class="cl" style="top:807.5px">        <span class="f">hal_gpio_pin_afio_select</span><span class="b3">(</span>GPIOA_BASE, GPIO_PIN_11, <span class="e">UART2_TX</span><span class="b3">)</span>;</div>
<div class="cl" style="top:826.5px">        <span class="f">hal_gpio_pin_afio_select</span><span class="b3">(</span>GPIOA_BASE, GPIO_PIN_12, <span class="e">UART2_RX</span><span class="b3">)</span>;</div>
<div class="cl" style="top:845.5px">        <span class="f">hal_gpio_pin_afio_en</span><span class="b3">(</span>GPIOA_BASE, GPIO_PIN_11, HAL_ENABLE<span class="b3">)</span>;</div>
<div class="cl" style="top:864.5px">        <span class="f">hal_gpio_pin_afio_en</span><span class="b3">(</span>GPIOA_BASE, GPIO_PIN_12, HAL_ENABLE<span class="b3">)</span>;</div>
<div class="cl" style="top:883.5px"><span class="c">#endif</span></div>
<div class="cl" style="top:902.5px">    <span class="b2">}</span></div>
<div class="cl" style="top:921.5px"><span class="b1">}</span></div>
<div class="cl" style="top:940.5px"></div>
<div class="lens">yujiadong, 5个月前 | 1 author (yujiadong)</div>
<div class="blame">yujiadong, 5<span class="zh">个月前</span> • <span class="zh">合并</span>[merge]ci230x</div>
</div></div>
<div class="shadow"></div>
<div class="rbox" style="left:346px;top:245px;width:428px;height:43px"></div>
<div class="rbox" style="left:373px;top:400px;width:485px;height:98px"></div>
</body></html>
